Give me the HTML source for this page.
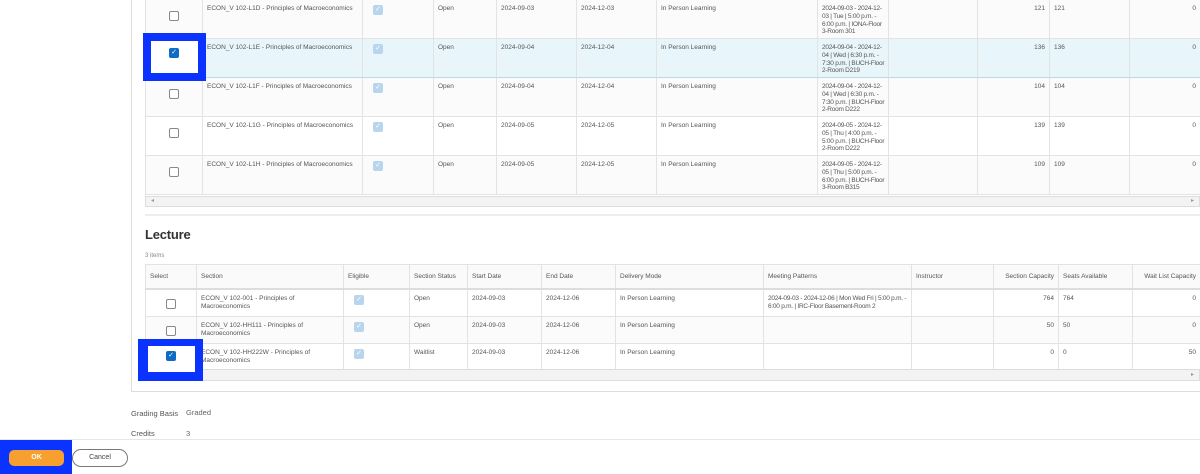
<!DOCTYPE html>
<html><head><style>
*{margin:0;padding:0;box-sizing:border-box}
body{width:1200px;height:474px;background:#fff;font-family:"Liberation Sans",sans-serif;color:#555;position:relative;overflow:hidden}
.a{position:absolute}
table{border-collapse:collapse;table-layout:fixed;position:absolute;font-size:6.5px;color:#555}
td,th{border:1px solid #e3e3e3;vertical-align:top;padding:0;font-weight:normal;text-align:left;overflow:hidden}
td>div,th>div{padding:5px 4px 0;line-height:7.8px;overflow:hidden;white-space:nowrap}
.t td>div{height:38px}
.l td>div{height:26px}
.m{letter-spacing:-0.25px}
tr.r td{background:#fbfbfb}
tr.s td{background:#e8f6fb;border-top:1px solid #b8dbe6;border-bottom:1px solid #b8dbe6}
.cb{display:block;margin:1px auto 0;width:10px;height:10px;border:1px solid #888;border-radius:2px;background:#fff}
.ck{display:block;width:10px;height:10px;border-radius:2px;background:#0e6cc4;color:#fff;font-size:7px;line-height:10px;text-align:center}
.el{display:block;width:10px;height:10px;border-radius:2px;background:#b9d5ee;color:#fff;font-size:7px;line-height:10px;text-align:center;margin:0 auto 0 6px}
.num{text-align:right}
.hl{position:absolute;background:#0a33ff}
.hl div{position:absolute;background:#fff}
</style></head><body>
<div class="a" style="left:131px;top:0;width:1px;height:392px;background:#ddd"></div>
<div class="a" style="left:131px;top:391px;width:1069px;height:1px;background:#ddd"></div>

<table class="t" style="left:145px;top:-1px;width:1055px">
<colgroup><col style="width:57px"><col style="width:160px"><col style="width:71px"><col style="width:63px"><col style="width:80px"><col style="width:80px"><col style="width:161px"><col style="width:71px"><col style="width:89px"><col style="width:72px"><col style="width:80px"><col style="width:71px"></colgroup>
<tr class="r"><td><div><span class="cb" style="margin-top:6px"></span></div></td><td><div>ECON_V 102-L1D - Principles of Macroeconomics</div></td><td><div><span class="el">✓</span></div></td><td><div>Open</div></td><td><div>2024-09-03</div></td><td><div>2024-12-03</div></td><td><div>In Person Learning</div></td><td><div class="m">2024-09-03 - 2024-12-<br>03 | Tue | 5:00 p.m. -<br>6:00 p.m. | IONA-Floor<br>3-Room 301</div></td><td><div></div></td><td class="num"><div>121</div></td><td><div>121</div></td><td class="num"><div>0</div></td></tr>
<tr class="s"><td><div><span class="cb" style="margin-top:6px"></span></div></td><td><div>ECON_V 102-L1E - Principles of Macroeconomics</div></td><td><div><span class="el">✓</span></div></td><td><div>Open</div></td><td><div>2024-09-04</div></td><td><div>2024-12-04</div></td><td><div>In Person Learning</div></td><td><div class="m">2024-09-04 - 2024-12-<br>04 | Wed | 6:30 p.m. -<br>7:30 p.m. | BUCH-Floor<br>2-Room D219</div></td><td><div></div></td><td class="num"><div>136</div></td><td><div>136</div></td><td class="num"><div>0</div></td></tr>
<tr class="r"><td><div><span class="cb" style="margin-top:6px"></span></div></td><td><div>ECON_V 102-L1F - Principles of Macroeconomics</div></td><td><div><span class="el">✓</span></div></td><td><div>Open</div></td><td><div>2024-09-04</div></td><td><div>2024-12-04</div></td><td><div>In Person Learning</div></td><td><div class="m">2024-09-04 - 2024-12-<br>04 | Wed | 6:30 p.m. -<br>7:30 p.m. | BUCH-Floor<br>2-Room D222</div></td><td><div></div></td><td class="num"><div>104</div></td><td><div>104</div></td><td class="num"><div>0</div></td></tr>
<tr><td><div><span class="cb" style="margin-top:6px"></span></div></td><td><div>ECON_V 102-L1G - Principles of Macroeconomics</div></td><td><div><span class="el">✓</span></div></td><td><div>Open</div></td><td><div>2024-09-05</div></td><td><div>2024-12-05</div></td><td><div>In Person Learning</div></td><td><div class="m">2024-09-05 - 2024-12-<br>05 | Thu | 4:00 p.m. -<br>5:00 p.m. | BUCH-Floor<br>2-Room D222</div></td><td><div></div></td><td class="num"><div>139</div></td><td><div>139</div></td><td class="num"><div>0</div></td></tr>
<tr class="r"><td><div><span class="cb" style="margin-top:6px"></span></div></td><td><div>ECON_V 102-L1H - Principles of Macroeconomics</div></td><td><div><span class="el">✓</span></div></td><td><div>Open</div></td><td><div>2024-09-05</div></td><td><div>2024-12-05</div></td><td><div>In Person Learning</div></td><td><div class="m">2024-09-05 - 2024-12-<br>05 | Thu | 5:00 p.m. -<br>6:00 p.m. | BUCH-Floor<br>3-Room B315</div></td><td><div></div></td><td class="num"><div>109</div></td><td><div>109</div></td><td class="num"><div>0</div></td></tr>
</table>
<div class="a" style="left:145px;top:196px;width:1055px;height:11px;background:#f3f3f3;border:1px solid #ddd;font-size:6px;color:#999;line-height:9px;padding:0 5px">◂<span style="float:right">▸</span></div>
<div class="a" style="left:145px;top:214px;width:1055px;height:2px;background:#eee"></div>

<div class="hl" style="left:143px;top:33px;width:63px;height:48px"><div style="left:8px;top:8px;width:47px;height:32px"></div></div>
<span class="ck a" style="left:169px;top:48px">✓</span>

<div class="a" style="left:145px;top:227px;font-size:13px;color:#333;font-weight:bold;letter-spacing:-0.2px">Lecture</div>
<div class="a" style="left:145px;top:253px;font-size:6px;color:#888">3 items</div>

<table class="l" style="left:145px;top:264px;width:1055px">
<colgroup><col style="width:51px"><col style="width:147px"><col style="width:66px"><col style="width:58px"><col style="width:74px"><col style="width:74px"><col style="width:148px"><col style="width:148px"><col style="width:82px"><col style="width:65px"><col style="width:74px"><col style="width:68px"></colgroup>
<tr style="background:#fafafa"><th style="border-bottom:2px solid #ddd"><div style="height:23px;padding-top:8px">Select</div></th><th style="border-bottom:2px solid #ddd"><div style="height:23px;padding-top:8px">Section</div></th><th style="border-bottom:2px solid #ddd"><div style="height:23px;padding-top:8px">Eligible</div></th><th style="border-bottom:2px solid #ddd"><div style="height:23px;padding-top:8px">Section Status</div></th><th style="border-bottom:2px solid #ddd"><div style="height:23px;padding-top:8px">Start Date</div></th><th style="border-bottom:2px solid #ddd"><div style="height:23px;padding-top:8px">End Date</div></th><th style="border-bottom:2px solid #ddd"><div style="height:23px;padding-top:8px">Delivery Mode</div></th><th style="border-bottom:2px solid #ddd"><div style="height:23px;padding-top:8px">Meeting Patterns</div></th><th style="border-bottom:2px solid #ddd"><div style="height:23px;padding-top:8px">Instructor</div></th><th class="num" style="border-bottom:2px solid #ddd"><div style="height:23px;padding-top:8px">Section Capacity</div></th><th style="border-bottom:2px solid #ddd"><div style="height:23px;padding-top:8px">Seats Available</div></th><th class="num" style="border-bottom:2px solid #ddd"><div style="height:23px;padding-top:8px">Wait List Capacity</div></th></tr>
<tr><td><div><span class="cb" style="margin-top:4px"></span></div></td><td><div>ECON_V 102-001 - Principles of<br>Macroeconomics</div></td><td><div><span class="el">✓</span></div></td><td><div>Open</div></td><td><div>2024-09-03</div></td><td><div>2024-12-06</div></td><td><div>In Person Learning</div></td><td><div class="m">2024-09-03 - 2024-12-06 | Mon Wed Fri | 5:00 p.m. -<br>6:00 p.m. | IRC-Floor Basement-Room 2</div></td><td><div></div></td><td class="num"><div>764</div></td><td><div>764</div></td><td class="num"><div>0</div></td></tr>
<tr class="r"><td><div><span class="cb" style="margin-top:4px"></span></div></td><td><div>ECON_V 102-HH111 - Principles of<br>Macroeconomics</div></td><td><div><span class="el">✓</span></div></td><td><div>Open</div></td><td><div>2024-09-03</div></td><td><div>2024-12-06</div></td><td><div>In Person Learning</div></td><td><div></div></td><td><div></div></td><td class="num"><div>50</div></td><td><div>50</div></td><td class="num"><div>0</div></td></tr>
<tr><td><div><span class="cb" style="margin-top:4px"></span></div></td><td><div>ECON_V 102-HH222W - Principles of<br>Macroeconomics</div></td><td><div><span class="el">✓</span></div></td><td><div>Waitlist</div></td><td><div>2024-09-03</div></td><td><div>2024-12-06</div></td><td><div>In Person Learning</div></td><td><div></div></td><td><div></div></td><td class="num"><div>0</div></td><td><div>0</div></td><td class="num"><div>50</div></td></tr>
</table>
<div class="a" style="left:145px;top:369px;width:1055px;height:12px;background:#f3f3f3;border:1px solid #ddd;font-size:6px;color:#999;line-height:10px;padding:0 5px"><span style="float:right">▸</span></div>

<div class="hl" style="left:138px;top:339px;width:65px;height:42px"><div style="left:10px;top:7px;width:47px;height:26px"></div></div>
<span class="ck a" style="left:166px;top:351px">✓</span>

<div class="a" style="left:131px;top:409px;font-size:7.5px;color:#555">Grading Basis</div>
<div class="a" style="left:186px;top:408px;font-size:7.5px;color:#666">Graded</div>
<div class="a" style="left:131px;top:429px;font-size:7.5px;color:#555">Credits</div>
<div class="a" style="left:186px;top:429px;font-size:7.5px;color:#666">3</div>
<div class="a" style="left:0;top:439px;width:1200px;height:1px;background:#e6e6e6"></div>

<div class="a" style="left:0;top:440px;width:72px;height:34px;background:#0a33ff"></div>
<div class="a" style="left:9px;top:450px;width:55px;height:16px;background:#f7a030;border-radius:5px;color:#fff;font-size:7px;font-weight:bold;text-align:center;line-height:16px">OK</div>
<div class="a" style="left:72px;top:449px;width:56px;height:18px;border:1px solid #777;border-radius:9px;background:#fff;color:#444;font-size:7px;text-align:center;line-height:16px">Cancel</div>
</body></html>
